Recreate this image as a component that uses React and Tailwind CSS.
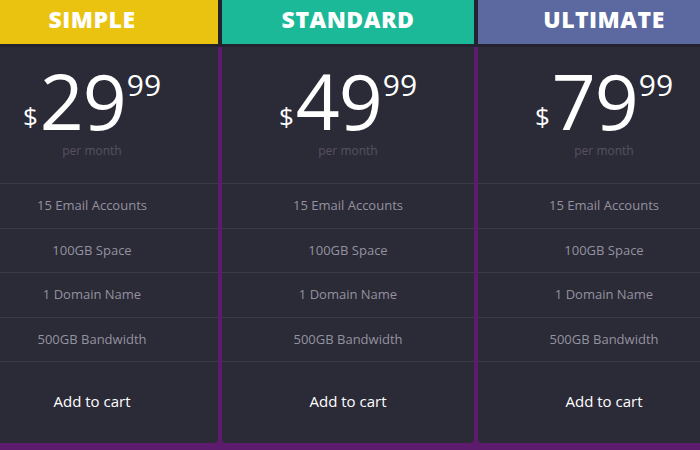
import React from "react";

const plans = [
  { name: "SIMPLE", price: "29", head: "bg-[#e9c30f]" },
  { name: "STANDARD", price: "49", head: "bg-[#1cb999]" },
  { name: "ULTIMATE", price: "79", head: "bg-[#5b69a0]" },
];

const features = ["15 Email Accounts", "100GB Space", "1 Domain Name", "500GB Bandwidth"];

function Card({ plan }) {
  return (
    <div className="w-[252px] shrink-0 flex flex-col bg-[#2b2a37] rounded-b-[4px] overflow-hidden">
      <div className={`${plan.head} h-[38px] flex items-center justify-center pb-[6px] border-b-[3px] border-[#23222e] box-content`}>
        <span className="text-white text-[23px] font-extrabold tracking-[0.5px] leading-none">{plan.name}</span>
      </div>
      <div className="h-[136px] flex flex-col items-center">
        <div className="flex items-start mt-[15px] text-white">
          <span className="text-[26px] leading-none mt-[41px] mr-[2px]">$</span>
          <span className="text-[77px] leading-none tracking-[-1px]">{plan.price}</span>
          <span className="text-[30px] leading-none mt-[8px] ml-[1px]">99</span>
        </div>
        <div className="text-[12px] text-[#55535f] mt-[6px] leading-none">per month</div>
      </div>
      {features.map((f) => (
        <div key={f} className="h-[44.5px] border-t border-[#3c3a4a] flex items-center justify-center text-[13px] text-[#94929f]">
          {f}
        </div>
      ))}
      <div className="flex-1 border-t border-[#3c3a4a] flex items-center justify-center pb-[3px] text-[15px] text-white">
        Add to cart
      </div>
    </div>
  );
}

export default function App() {
  return (
    <div
      className="w-[700px] h-[450px] overflow-hidden bg-[linear-gradient(to_bottom,#23222e_47px,#5c1b6c_47px)]"
      style={{ fontFamily: '"Open Sans", "Liberation Sans", sans-serif' }}
    >
      <div className="flex gap-[4px] ml-[-34px] h-[443px]">
        {plans.map((p) => (
          <Card key={p.name} plan={p} />
        ))}
      </div>
    </div>
  );
}
